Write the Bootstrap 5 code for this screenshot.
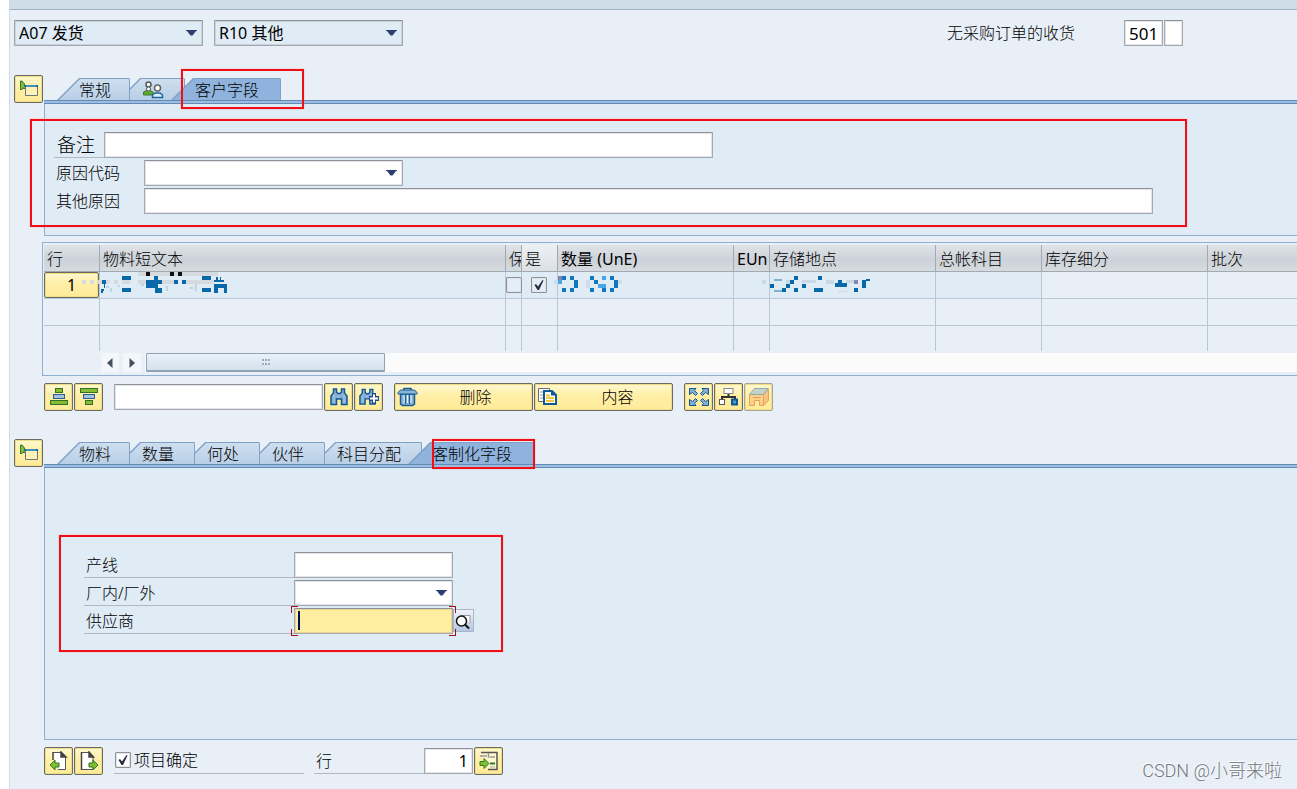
<!DOCTYPE html>
<html lang="zh-CN">
<head>
<meta charset="utf-8">
<meta name="viewport" content="width=device-width, initial-scale=1">
<title>无采购订单的收货</title>
<link rel="stylesheet" href="https://cdn.jsdelivr.net/npm/bootstrap@5.3.0/dist/css/bootstrap.min.css">
<style>
:root{--page:#e8eff7;--panel:#dfebf5;--edge:#8fb0d0;--line:#bcc6d2;--ctl:26px}
body{background:#fff;font-family:"Noto Sans","Noto Sans CJK SC",sans-serif;font-size:16px;line-height:24px;color:#000;overflow-x:hidden}
label,.tabx,.ybtn span{font-weight:300}
.shell{margin-left:9px;border-left:1px solid #cfd9e8;background:var(--page);min-height:100vh;position:relative}
.topbar{height:10px;background:#cfdde8;border-bottom:1px solid #9db3c4}
.head{padding:10px 114px 0 4px}
.fld{height:var(--ctl);border:1px solid #a4a8ae;border-top-color:#8e9298;border-radius:1px;background:#fff;box-shadow:inset 0 0 0 1px #e3e5e8;padding:0 4px;color:#000;display:block;min-width:0}
.fld:focus{outline:0}
select.fld{appearance:none;background:#fff url("data:image/svg+xml,%3Csvg xmlns='http://www.w3.org/2000/svg' width='11' height='6'%3E%3Cpath d='M0 0h11v1H10L6.500 5.500h-2L1 1H0z' fill='%232b3f73'/%3E%3C/svg%3E") no-repeat right 5px top 9px}
.head select.fld{background-color:var(--panel);box-shadow:inset 0 0 0 1px #c9d3dc;width:189px}
.ybtn{height:28px;width:29px;flex:none;padding:0;border:1px solid #6c6b62;border-radius:2px;background:linear-gradient(#fff8d2,#ffefa6 45%,#ffeb98);box-shadow:inset 0 0 0 1px #efdc86;color:#000;display:flex;align-items:center;justify-content:center;position:relative}
.ybtn svg{flex:none}
.ybtn.wide{width:139px;justify-content:flex-start;padding-left:2px}
.ybtn.wide span{flex:1;text-align:center}
.faded{border-color:#a9a493}
.faded svg{opacity:.5}
.frame{padding-left:4px;gap:1px}
.strip{padding:3px 0 0 13px;height:25px}
.tabx{position:relative;z-index:var(--z);height:22px;border:0;background:none;padding:2px 21px 0 24px;margin-left:-12px;line-height:24px;color:#000;white-space:nowrap;display:flex;align-items:center}
.tabx:first-child{margin-left:0;padding:2px 19px 0 22px}
.tabx::before,.tabx::after{content:"";position:absolute;z-index:-1;inset:0}
.tabx::before{background:#7f9fc4;clip-path:polygon(22px 0,calc(100% - 1px) 0,100% 1px,100% 100%,0 100%)}
.tabx::after{background:linear-gradient(#cfdff0,#b9cfe6);clip-path:polygon(23px 1px,calc(100% - 1px) 1px,calc(100% - 1px) 100%,2px 100%)}
.tabx.on{z-index:9;padding:2px 22px 0 24px;margin-left:-14px}
.tabx.on::after{background:#8fb3dc}
.rule{height:4px;background:#9cbce0;border-top:1px solid #6389b6;border-bottom:1px solid #6389b6}
.pane{background:var(--panel);border:solid var(--edge);border-width:0 0 1px 1px}
.pane1{padding:28px 144px 21px 9px}
.pane2{padding:84px 0 105px 39px}
.rows{display:flex;flex-direction:column;gap:2px}
.lbl{height:var(--ctl);padding:1px 0 0 2px;flex:none}
.ul{border-bottom:1px solid #b3b8be}
.big{font-size:19px;padding-left:3px}
.num{font-size:17px}
.note{position:absolute;border:2px solid #f00f16;box-shadow:0 0 1px #f88;pointer-events:none;z-index:20}
.gridbox{margin:6px 0 0 32px;border:solid var(--edge);border-width:1px 0 1px 1px;padding:2px 0 3px 1px}
.gt{table-layout:fixed;width:100%;margin:0;border-collapse:separate;border-spacing:0}
.gt th,.gt td{padding:0 0 0 3px;border-right:1px solid var(--line);border-bottom:1px solid var(--line);height:27px;white-space:nowrap}
.gt th{font-weight:400;background:linear-gradient(#e0e4e8,#cdd2da 55%,#d6dbde);border-color:#a0a9b4;overflow:hidden;line-height:24px;padding-top:2px}
.gt th.zh{font-weight:300}
.gt th.lit{background:linear-gradient(#eceff2,#dce0e5)}
.gt td{position:relative;padding:0}
.gt tr:last-child td{border-bottom:0;height:25px}
.gt th:last-child,.gt td:last-child{border-right:0}
.gt .sel{background:#dfecf6}
.gt .ybtn{width:55px;height:26px}
.mosaic{position:absolute;left:-20px;top:-4px;z-index:2}
.ck{appearance:none;width:16px;height:16px;border:1px solid #8f9299;border-radius:1px;background:#fff;box-shadow:inset 0 0 0 1px #e1e3e6;margin:0;display:block;flex:none}
.ck:checked{background:#fff url("data:image/svg+xml,%3Csvg xmlns='http://www.w3.org/2000/svg' width='14' height='14'%3E%3Cpath d='M2.500 7l1.500-1 2 2.500L10.500 2l1 .5L7 12H5.500z' fill='%232b2b45'/%3E%3C/svg%3E") no-repeat center}
.gt .ck{background-color:#e4eef6}
.sbar{height:19px;margin-top:2px;padding-left:57px}
.sbar button{border:0;padding:0;background:#f3f6fa;width:18px;height:19px;margin-right:4px;display:flex;align-items:center;justify-content:center}
.track{background:#fbfbfb;padding-left:1px}
.thumb{width:239px;height:19px;border:1px solid #93a3b3;border-bottom-width:2px;border-radius:1px;background:linear-gradient(#e8f1f8,#d3e2ee)}
.tools{padding:7px 0 0 34px;gap:1px}
.ms11{margin-left:10px}
.focusf{position:relative;width:159px}
.focusf .fld{background:#ffee9e;width:100%;box-shadow:inset 0 0 0 1px #e6d690}
.focusf i{position:absolute;width:7px;height:7px;border:0 solid #a01218}
.caret{position:absolute;left:4px;top:3px;width:2px;height:19px;background:#000b5c}
.f4{width:21px;height:23px;border:1px solid #aab4c4;padding:0;background:linear-gradient(#f0f4fa,#b3c7e4);margin-top:1px}
.mk{position:absolute;right:15px;bottom:4px;font-family:Roboto,"Noto Sans CJK SC",sans-serif;font-weight:300;font-size:18px;line-height:28px;color:#74787d;text-shadow:-1px -1px 0 #fff}
</style>
</head>
<body>
<svg width="0" height="0" class="position-absolute" aria-hidden="true">
<defs>
<symbol id="i-open" viewBox="0 0 20 18"><path d="M1.500 1v9M1.500 8.500h5" fill="none" stroke="#55605a"/><path d="M1.500 1h1.500l2.500 3v3L3 9.500H1.500z" fill="#7fbd32" stroke="#2f7a2c"/><path d="M6.500 6.500h12v9h-12z" fill="#fff2b4" stroke="#6b7780"/><path d="M6 6h13" stroke="#1568a5" stroke-width="2"/><path d="M7 6h10" stroke="#7fb4dc"/></symbol>
<symbol id="i-bin" viewBox="0 0 20 20"><path d="M4.500 2h3v3l1.500 1.500h2L12.500 5V2h3v4L18 9v8.500h-5.500V12h-5v5.500H2V9l2.500-3z" fill="#86add3" stroke="#0f5a90" stroke-width="1.500"/><path d="M5 7v9M15 7v9M9.500 8v3" stroke="#a9c7e4"/></symbol>
</defs>
</svg>
<main class="shell">
<div class="topbar"></div>
<header class="head d-flex">
<select class="fld" aria-label="操作"><option>A07 发货</option></select>
<select class="fld" style="margin-left:11px" aria-label="参考凭证"><option>R10 其他</option></select>
<label class="lbl ms-auto ps-0" for="mv" style="width:177px">无采购订单的收货</label>
<input class="fld num" id="mv" value="501" style="width:39px">
<input class="fld" aria-label="特殊库存" style="width:19px;margin-left:1px">
</header>

<section class="frame d-flex align-items-start position-relative" style="margin-top:29px">
<button class="ybtn" aria-label="关闭抬头"><svg width="20" height="18"><use href="#i-open"/></svg></button>
<div class="flex-fill">
<nav class="strip d-flex">
<button class="tabx" style="--z:5">常规</button>
<button class="tabx" style="--z:4" aria-label="伙伴"><svg width="22" height="18" viewBox="0 0 22 18"><path d="M1.500 14v-3l3-1.500h4l2.500 1.500v3z" fill="#62a52e" stroke="#3a7d2c"/><circle cx="6.500" cy="3.500" r="2.500" fill="#fff" stroke="#555" stroke-width="1.500"/><circle cx="6.500" cy="8" r="2" fill="#fff" stroke="#555"/><path d="M10.500 16.500V14l2.500-2h5l2.500 2v2.500z" fill="#dcebf8" stroke="#1c659f" stroke-width="1.500"/><circle cx="15.500" cy="7" r="3" fill="#fff" stroke="#666" stroke-width="1.500"/></svg></button>
<button class="tabx on">客户字段</button>
</nav>
<div class="rule"></div>
<div class="pane pane1 rows">
<div class="d-flex"><label class="lbl ul big" for="memo" style="width:50px">备注</label><input class="fld" id="memo" style="width:609px"></div>
<div class="d-flex"><label class="lbl" for="rc" style="width:90px">原因代码</label><select class="fld" id="rc" style="width:259px"><option></option></select></div>
<div class="d-flex"><label class="lbl" for="or" style="width:90px">其他原因</label><input class="fld flex-fill" id="or"></div>
</div>
</div>
<div class="note" style="left:171px;top:-6px;width:123px;height:40px"></div>
<div class="note" style="left:20px;right:110px;top:44px;height:108px"></div>
</section>

<section class="gridbox">
<table class="gt">
<colgroup><col style="width:56px"><col style="width:406px"><col style="width:16px"><col style="width:36px"><col style="width:176px"><col style="width:36px"><col style="width:166px"><col style="width:106px"><col style="width:166px"><col></colgroup>
<thead><tr><th class="zh">行</th><th class="zh">物料短文本</th><th class="zh">保</th><th class="zh lit">是</th><th>数量 (UnE)</th><th>EUn</th><th class="zh">存储地点</th><th class="zh">总帐科目</th><th class="zh">库存细分</th><th class="zh">批次</th></tr></thead>
<tbody>
<tr><td><button class="ybtn">1</button></td>
<td class="sel"><svg class="mosaic" width="160" height="30" viewBox="80 268 160 30" shape-rendering="crispEdges" aria-hidden="true">
<path d="M82 280h4v4h-4zM90 280h4v4h-4zM98 280h4v4h-4zM106 280h4v4h-4zM114 280h4v4h-4zM122 280h8v4h-8zM138 280h12v4h-12zM162 280h12v4h-12zM186 280h28v4h-28zM138 272h80v4h-80z" fill="#d4dade"/>
<path d="M146 272h4v4h-4zM170 272h4v4h-4zM178 272h4v4h-4z" fill="#111"/>
<path d="M102 280h4v4h-4zM104 284h1v4h-1zM101 289h3v2h-1v2h-2zM122 276h9v4h-9zM122 288h9v4h-9zM154 276h4v4h4v4h-4v4h4v5h-7v-5h-5v-4h-4v-4h8zM146 284h4v4h-4zM174 280h4v4h-4zM182 280h4v4h-4zM202 276h9v4h-9zM202 288h9v4h-9zM216 277h2v3h2v-3h1v3h3v2h-10v-2h2zM214 284h13v9h-3v-5h-6v5h-4z" fill="#0868a8"/>
<path d="M106 286h3v2h-3zM110 288h2v4h-2zM118 285h2v2h-2zM141 284h3v2h-3zM166 286h2v5h-2zM190 287h3v2h-3zM195 284h2v7h-2z" fill="#b9d5e7"/></svg></td>
<td class="sel"><input type="checkbox" class="ck" aria-label="保"></td>
<td class="sel"><input type="checkbox" class="ck" style="margin-left:9px" checked aria-label="是"></td>
<td class="sel"><svg class="mosaic" width="90" height="30" viewBox="538 268 90 30" shape-rendering="crispEdges" aria-hidden="true">
<path d="M554 280h8v4h-8zM570 276h4v4h-4zM586 280h4v8h-4zM598 284h4v4h-4zM618 280h4v4h-4z" fill="#ccdcea"/>
<path d="M558 276h4v4h-4z" fill="#8285b2"/><path d="M558 280h4v4h-4zM602 276h4v4h-4zM598 284h8v4h-8z" fill="#45a6e8"/>
<path d="M562 276h4v4h-4zM562 288h4v4h-4zM570 276h4v4h-4zM574 280h4v8h-4zM570 288h4v4h-4zM590 276h4v4h-4zM590 288h4v4h-4zM594 280h4v4h-4zM602 288h4v4h-4zM610 276h4v4h-4zM614 280h4v8h-4zM610 288h4v4h-4z" fill="#1278be"/></svg></td>
<td class="sel"></td>
<td class="sel"><svg class="mosaic" width="130" height="30" viewBox="750 268 130 30" shape-rendering="crispEdges" aria-hidden="true">
<path d="M762 280h4v4h-4zM786 280h8v4h-8zM802 280h14v3h-14zM826 280h8v4h-8zM846 280h12v3h-12zM838 291h9v1h-9z" fill="#c6d9e5"/><path d="M774 279h8v2h-8zM774 290h8v2h-8z" fill="#7db2d6"/>
<path d="M770 284h4v4h-4zM794 276h4v4h-4zM790 280h4v4h-4zM786 284h4v4h-4zM782 288h4v4h-4zM794 288h4v4h-4zM802 284h4v4h-4zM818 276h4v4h-4zM814 288h9v4h-9zM838 280h4v3h5v4h-12v-4h3zM854 288h4v4h-4zM862 280h4v8h-4zM866 279h4v2h-4z" fill="#0868a8"/><path d="M854 280h4v4h-4z" fill="#8488b2"/></svg></td>
<td class="sel"></td><td></td><td></td></tr>
<tr><td></td><td></td><td></td><td></td><td></td><td></td><td></td><td></td><td></td><td></td></tr>
<tr><td></td><td></td><td></td><td></td><td></td><td></td><td></td><td></td><td></td><td></td></tr>
</tbody></table>
<div class="sbar d-flex">
<button aria-label="向左"><svg width="6" height="10"><path d="M5.500 0v10L0 5z" fill="#44505c"/></svg></button>
<button aria-label="向右"><svg width="6" height="10"><path d="M.5 0v10L6 5z" fill="#44505c"/></svg></button>
<div class="track flex-fill"><div class="thumb d-flex align-items-center justify-content-center"><svg width="8" height="6" shape-rendering="crispEdges"><path d="M0 1h8M0 5h8" stroke="#9fabb8" stroke-width="2" stroke-dasharray="2 1"/></svg></div></div>
</div>
</section>

<div class="tools d-flex">
<button class="ybtn" aria-label="升序"><svg width="20" height="18" viewBox="0 0 20 18"><g stroke="#356f28" fill="#84bd32"><rect x="6.500" y=".5" width="7" height="4"/><rect x="4.500" y="6.500" width="11" height="4" fill="#a6c1e0" stroke="#285f8f"/><rect x="1.500" y="12.500" width="17" height="4"/></g></svg></button>
<button class="ybtn" aria-label="降序"><svg width="20" height="18" viewBox="0 0 20 18"><g stroke="#356f28" fill="#84bd32"><rect x="1.500" y=".5" width="17" height="4"/><rect x="4.500" y="6.500" width="11" height="4" fill="#a6c1e0" stroke="#285f8f"/><rect x="6.500" y="12.500" width="7" height="4"/></g></svg></button>
<input class="fld ms11 align-self-center" aria-label="查找" style="width:209px">
<button class="ybtn" aria-label="查找"><svg width="20" height="20"><use href="#i-bin"/></svg></button>
<button class="ybtn" aria-label="查找下一个"><svg width="22" height="20" viewBox="0 0 22 20"><use href="#i-bin" width="19" height="20"/><path d="M14 6h4v3h3v5h-3v3h-4v-3h-3V9h3z" fill="#234a94"/><path d="M16 7.500v8M12 11.500h8" stroke="#fff" stroke-width="2"/></svg></button>
<button class="ybtn wide ms11"><svg width="22" height="20" viewBox="0 0 22 20"><path d="M3.500 7h14v10l-2 1.500h-10L3.500 17z" fill="#8cb0d2" stroke="#155d92" stroke-width="1.500"/><path d="M7 8v8M10.500 8v8M14 8v8" stroke="#e9f3fb"/><path d="M8.500 8v9M12.500 8v9" stroke="#155d92"/><path d="M7 3V1.500h7V3" fill="none" stroke="#155d92" stroke-width="1.500"/><path d="M3.500 3h14l2.500 2.500V7H1V5.500z" fill="#8cb4d8" stroke="#155d92"/></svg><span>删除</span></button>
<button class="ybtn wide"><svg width="22" height="20" viewBox="0 0 22 20"><path d="M1.500 1.500h11v13h-11z" fill="#fff" stroke="#6b6b6b"/><path d="M3 5h3M3 8h3M3 11h3" stroke="#999"/><path d="M7 4h8l4 4v9H7z" fill="#fff" stroke="#0e5c93" stroke-width="2"/><path d="M14 3v5.500h5.500z" fill="#0e5c93"/><path d="M9 8.500h4M9 11h8M9 14h8" stroke="#f6c53d" stroke-width="2"/></svg><span class="ps-1">内容</span></button>
<button class="ybtn ms11" aria-label="展开"><svg width="22" height="20" viewBox="0 0 22 20"><path d="M1.500 1.500H8L6.500 3.500l3 3-2 2-3-3-3 2zM20.500 1.500H14l1.500 2-3 3 2 2 3-3 3 2zM1.500 18.500H8l-1.500-2 3-3-2-2-3 3-3-2zM20.500 18.500H14l1.500-2-3-3 2-2 3 3 3-2z" fill="#86add3" stroke="#0f5a90"/></svg></button>
<button class="ybtn" aria-label="层次"><svg width="22" height="20" viewBox="0 0 22 20"><path d="M10.500 6v4M4 12.500V10h13v2.500" fill="none" stroke="#333" stroke-width="2"/><rect x="6" y="1.500" width="9" height="5" fill="#fff" stroke="#888"/><rect x="1.500" y="12.500" width="5" height="5" fill="#fff" stroke="#555"/><rect x="14" y="12.500" width="5" height="5" fill="#4a9bd4" stroke="#0f5a90" stroke-width="2"/></svg></button>
<button class="ybtn faded" disabled aria-label="仓库"><svg width="22" height="20" viewBox="0 0 22 20"><path d="M1.500 7.500h14v11h-4v-5h-5v5h-5z" fill="#fbb76a" stroke="#d4562a"/><path d="M15.500 7.500l5-5v11l-5 5z" fill="#f09a5a" stroke="#d4562a"/><path d="M1.500 7.500l5-6h14l-5 6z" fill="#8fb4d8" stroke="#2c6496"/><path d="M5 10.500h8" stroke="#c24f30"/></svg></button>
</div>

<section class="frame d-flex align-items-start position-relative" style="margin-top:28px">
<button class="ybtn" aria-label="关闭明细"><svg width="20" height="18"><use href="#i-open"/></svg></button>
<div class="flex-fill">
<nav class="strip d-flex">
<button class="tabx" style="--z:7">物料</button><button class="tabx" style="--z:6">数量</button><button class="tabx" style="--z:5">何处</button><button class="tabx" style="--z:4">伙伴</button><button class="tabx" style="--z:3">科目分配</button><button class="tabx on">客制化字段</button>
</nav>
<div class="rule"></div>
<div class="pane pane2 rows">
<div class="d-flex"><label class="lbl ul" for="pl" style="width:210px">产线</label><input class="fld" id="pl" style="width:159px"></div>
<div class="d-flex"><label class="lbl ul" for="io" style="width:210px">厂内/厂外</label><select class="fld" id="io" style="width:159px"><option></option></select></div>
<div class="d-flex"><label class="lbl ul" for="vd" style="width:210px">供应商</label>
<div class="focusf"><input class="fld" id="vd"><span class="caret"></span><i style="left:-3px;top:-2px;border-width:1px 0 0 1px"></i><i style="right:-3px;top:-2px;border-width:1px 1px 0 0"></i><i style="left:-3px;bottom:-2px;border-width:0 0 1px 1px"></i><i style="right:-3px;bottom:-2px;border-width:0 1px 1px 0"></i></div>
<button class="f4" aria-label="搜索帮助"><svg class="d-block" width="19" height="20" viewBox="0 0 19 20"><path d="M7 4.500h9v8" fill="#fff" stroke="#999"/><circle cx="7.500" cy="10" r="5" fill="#fff" stroke="#111" stroke-width="1.500"/><path d="M11 13.500l4 4" stroke="#111" stroke-width="2"/></svg></button></div>
</div>
</div>
<div class="note" style="left:422px;top:0;width:103px;height:30px"></div>
<div class="note" style="left:49px;top:96px;width:444px;height:117px"></div>
</section>

<footer class="tools d-flex">
<button class="ybtn" aria-label="上一项"><svg width="20" height="20" viewBox="0 0 20 20"><path d="M4 1.500h8.500l4 4v13H9" fill="#fff" stroke="#555"/><path d="M4 1v8M12 1l5 5h-5z" fill="#444" stroke="#444" stroke-width="1.500"/><path d="M1 14l5-5v3h4v4H6v3z" fill="#84bd32" stroke="#2c7a2c"/></svg></button>
<button class="ybtn" aria-label="下一项"><svg width="20" height="20" viewBox="0 0 20 20"><path d="M2.500 1.500H10l4 4v13H2.500z" fill="#fff" stroke="#555"/><path d="M2.500 1v18M10 1l4.500 5H10z" fill="#444" stroke="#444" stroke-width="1.500"/><path d="M19 14l-5-5v3h-4v4h4v3z" fill="#84bd32" stroke="#2c7a2c"/></svg></button>
<div class="ms11 ul d-flex align-items-center" style="width:190px;height:27px;padding-left:1px;gap:3px"><input type="checkbox" class="ck" id="okc" checked><label for="okc">项目确定</label></div>
<label class="lbl ul" for="ln" style="width:110px;height:27px;margin-left:9px;padding-top:2px">行</label>
<input class="fld text-end align-self-center" id="ln" value="1" style="width:49px;margin-left:-1px">
<button class="ybtn" aria-label="转到行"><svg width="20" height="20" viewBox="0 0 20 20"><path d="M2 1.500h16v17H9" fill="#fff7d0" stroke="#555" stroke-width="1.500"/><path d="M1 5h7M11 6h5M9.500 2v5" stroke="#999" stroke-width="1.500"/><path d="M11 12.500h5" stroke="#2c7a2c" stroke-width="2"/><path d="M11 16h5" stroke="#aaa"/><path d="M10 12.500l-5-5v3H1v4h4v3z" fill="#84bd32" stroke="#2c7a2c"/></svg></button>
</footer>
<div class="mk">CSDN @小哥来啦</div>
</main>
<script src="https://cdn.jsdelivr.net/npm/bootstrap@5.3.0/dist/js/bootstrap.bundle.min.js"></script>
</body>
</html>
